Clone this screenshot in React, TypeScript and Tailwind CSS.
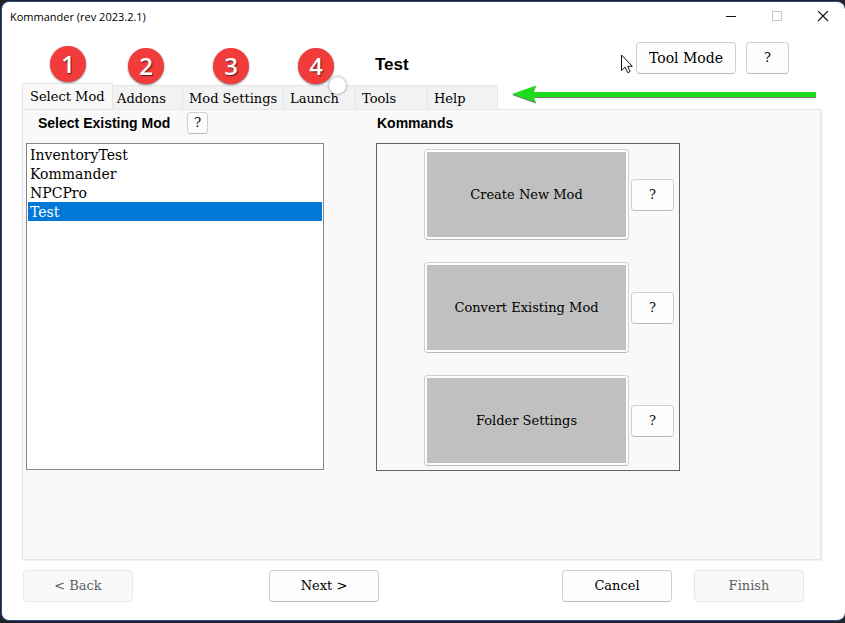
import { useState } from "react"
import clsx from "clsx"

const TABS = [
  { label: "Select Mod", width: "w-[91px]", pad: "pl-[7px]", badge: "1", badgePos: "left-[28px]" },
  { label: "Addons", width: "w-[70px]", pad: "pl-1", badge: "2", badgePos: "left-[15px]" },
  { label: "Mod Settings", width: "w-[101px]", pad: "pl-1.5", badge: "3", badgePos: "left-[30px]" },
  { label: "Launch", width: "w-[72px]", pad: "pl-1.5", badge: "4", badgePos: "left-[14px]" },
  { label: "Tools", width: "w-[72px]", pad: "pl-1.5" },
  { label: "Help", width: "w-[70px]", pad: "pl-1.5" },
]

const MODS = ["InventoryTest", "Kommander", "NPCPro", "Test"]
const KOMMANDS = ["Create New Mod", "Convert Existing Mod", "Folder Settings"]

const buttonBase =
  "shrink-0 rounded-[4px] border border-[#d0d0d0] border-b-[#bababa] bg-[#fdfdfd] disabled:border-[#e8e8e8] disabled:bg-[#f9f9f9] disabled:text-[#5f5f5f]"

function TitleBar() {
  return (
    <div className="flex h-[30px] items-center pl-2 pr-4">
      <span className="font-['Open_Sans','Noto_Sans',sans-serif] text-[11px] leading-4">
        Kommander (rev 2023.2.1)
      </span>
      <div className="ml-auto flex gap-[34px]">
        <button aria-label="Minimize">
          <svg width="12" height="12" viewBox="0 0 12 12" stroke="#111">
            <path d="M1 5.5h10" />
          </svg>
        </button>
        <button aria-label="Maximize" disabled>
          <svg width="12" height="12" viewBox="0 0 12 12" fill="none" stroke="#c8c8c8">
            <rect x="1.5" y="0.5" width="9" height="9" />
          </svg>
        </button>
        <button aria-label="Close">
          <svg width="12" height="12" viewBox="0 0 12 12" stroke="#111" strokeWidth="1.1">
            <path d="M1 0l10 10M11 0L1 10" />
          </svg>
        </button>
      </div>
    </div>
  )
}

function StepBadge({ value, pos }: { value: string; pos: string }) {
  return (
    <span
      className={clsx(
        "pointer-events-none absolute -top-[37px] z-10 flex size-9 items-center justify-center rounded-full bg-[#f23b3b] font-['Open_Sans',sans-serif] text-[24px] leading-none font-semibold text-white shadow-[0_1px_2px_rgba(0,0,0,0.5)] [text-shadow:1px_1px_1px_rgba(0,0,0,0.6)]",
        pos
      )}
    >
      {value}
    </span>
  )
}

function Arrow() {
  return (
    <div className="mr-[5px] mb-[6px] ml-[14px] flex flex-1 items-center self-end drop-shadow-[0_1px_0_#777]">
      <svg width="25" height="18" viewBox="0 0 25 18" fill="#1ddc1d" className="shrink-0">
        <path d="M0 9L24 0.5l-3.5 8.5 3.5 8.5z" />
      </svg>
      <div className="-ml-[5px] h-[5px] flex-1 bg-[#1ddc1d]" />
    </div>
  )
}

export default function App() {
  const [tab, setTab] = useState("Select Mod")
  const [mod, setMod] = useState("Test")

  return (
    <div className="flex min-h-screen flex-col border-t border-b-2 border-l border-[#222226] bg-[#222226] font-['DejaVu_Serif',serif] text-[13px] leading-5 text-black">
      <div className="flex flex-1 flex-col rounded-lg border-t border-b border-l border-[#2c4a8c] bg-white">
        <TitleBar />

        {/* Header */}
        <div className="relative flex items-start pt-[10px] pr-14 pl-[373px]">
          <h1 className="mt-[13px] font-['Liberation_Sans',sans-serif] text-[17px] leading-5 font-bold">
            {mod}
          </h1>
          <svg
            width="13"
            height="20"
            viewBox="0 0 13 20"
            fill="#fff"
            stroke="#15151f"
            className="absolute top-[22px] right-[212px]"
          >
            <path d="M1.5 1v15.5l3.6-3.4 2.6 5.6 2.5-1.1-2.5-5.3h4.6z" />
          </svg>
          <button className={clsx(buttonBase, "ml-auto h-8 w-[100px] text-[14px]")}>
            Tool Mode
          </button>
          <button className={clsx(buttonBase, "ml-[10px] h-8 w-[43px]")}>?</button>
        </div>

        {/* Tabs */}
        <div className="mt-2 mr-6 ml-5 flex items-end">
          <div role="tablist" className="flex items-end">
            {TABS.map((t) => {
              const active = t.label === tab
              return (
                <div key={t.label} className={clsx("relative", t.width)}>
                  {t.badge && t.badgePos && <StepBadge value={t.badge} pos={t.badgePos} />}
                  {t.label === "Launch" && (
                    <span className="absolute -top-2 left-[45px] z-10 size-[17px] rounded-full bg-white shadow-[0_0_3px_rgba(0,0,0,0.5)]" />
                  )}
                  <button
                    role="tab"
                    aria-selected={active}
                    onClick={() => setTab(t.label)}
                    className={clsx(
                      "block w-full border-t border-r border-[#e5e5e5] text-left whitespace-nowrap",
                      t.pad,
                      active ? "h-[26px] border-l bg-[#f9f9f9]" : "h-6 bg-[#f2f2f2] pt-[2px]"
                    )}
                  >
                    {t.label}
                  </button>
                </div>
              )
            })}
          </div>
          <Arrow />
        </div>

        {/* Tab page */}
        <main className="mr-6 ml-5 flex flex-1 items-start border border-[#e5e5e5] bg-[#f9f9f9] pl-[3px] shadow-[2px_1px_0_#f2f2f2]">
          <div className="w-[298px]">
            <div className="flex h-[33px] items-start pl-3">
              <label
                htmlFor="mods"
                className="mt-[3px] font-['Liberation_Sans',sans-serif] text-[14px] leading-5 font-bold"
              >
                Select Existing Mod
              </label>
              <button className={clsx(buttonBase, "mt-[2px] ml-[17px] h-[22px] w-[21px] leading-5")}>
                ?
              </button>
            </div>
            <select
              id="mods"
              size={4}
              value={mod}
              onChange={(e) => setMod(e.target.value)}
              className="block h-[327px] w-full appearance-none overflow-hidden rounded-none border border-[#828790] bg-white p-px text-[14px] outline-none"
            >
              {MODS.map((name) => (
                <option
                  key={name}
                  value={name}
                  className="h-[19px] min-h-0 px-[2px] pt-[2px] pb-0 checked:bg-[#0078d7] checked:bg-[linear-gradient(#0078d7,#0078d7)] checked:text-white checked:[-webkit-text-fill-color:#fff]"
                >
                  {name}
                </option>
              ))}
            </select>
          </div>

          <section aria-labelledby="kommands" className="ml-[52px] w-[304px]">
            <h2
              id="kommands"
              className="h-[33px] pt-[3px] pl-px font-['Liberation_Sans',sans-serif] text-[14px] leading-5 font-bold"
            >
              Kommands
            </h2>
            <div className="flex flex-col gap-[22px] border border-[#646464] pt-[5px] pr-[5px] pb-1 pl-[47px]">
              {KOMMANDS.map((name) => (
                <div key={name} className="flex items-center gap-[2px]">
                  <button className={clsx(buttonBase, "h-[91px] w-[205px] p-[2px]")}>
                    <span className="flex h-full items-center justify-center bg-[#c0c0c0]">
                      {name}
                    </span>
                  </button>
                  <button className={clsx(buttonBase, "h-8 w-[43px]")}>?</button>
                </div>
              ))}
            </div>
          </section>
        </main>

        {/* Wizard buttons */}
        <div className="mt-[10px] mb-[18px] flex pr-[41px] pl-[21px]">
          <button disabled className={clsx(buttonBase, "h-8 w-[110px]")}>&lt; Back</button>
          <button className={clsx(buttonBase, "ml-[136px] h-8 w-[110px]")}>Next &gt;</button>
          <button className={clsx(buttonBase, "ml-auto h-8 w-[110px]")}>Cancel</button>
          <button disabled className={clsx(buttonBase, "ml-[22px] h-8 w-[110px]")}>Finish</button>
        </div>
      </div>
    </div>
  )
}
